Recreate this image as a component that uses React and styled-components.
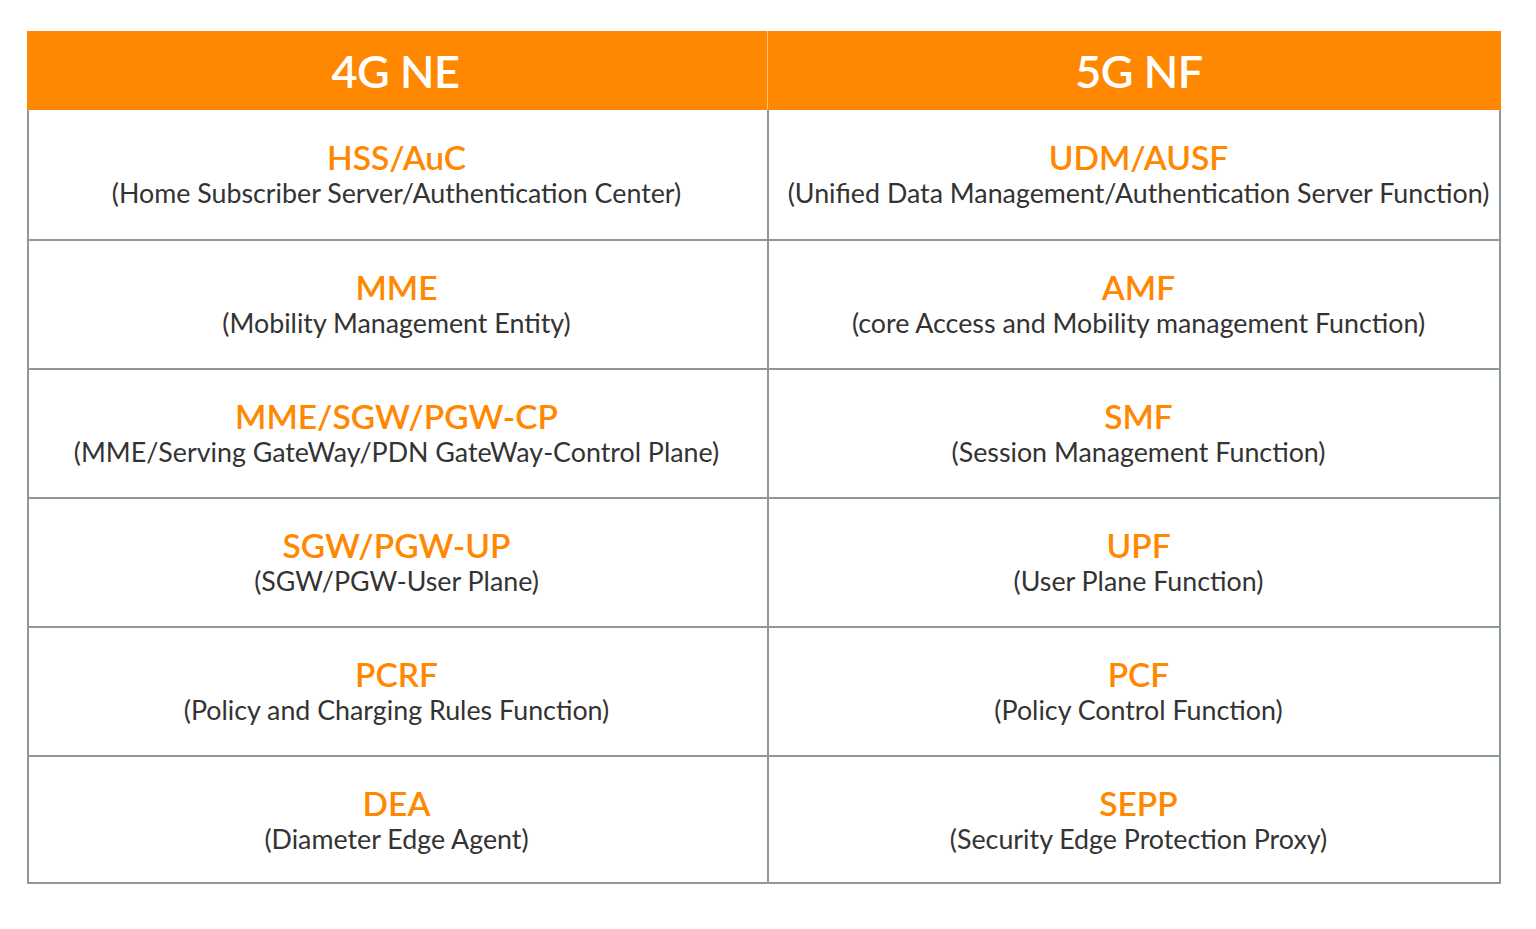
import styled, { createGlobalStyle } from "styled-components";

const GlobalStyle = createGlobalStyle`
  html, body {
    margin: 0;
    padding: 0;
    background: #ffffff;
    font-family: Lato, "Open Sans", sans-serif;
  }
`;

const Page = styled.div`
  width: 1536px;
  height: 929px;
  padding: 31px 0 0 27px;
  box-sizing: border-box;
`;

const Table = styled.div`
  display: grid;
  grid-template-columns: 740px 734px;
  width: 1474px;
`;

const HeadCell = styled.div`
  height: 79px;
  background: #ff8800;
  color: #ffffff;
  font-size: 45px;
  font-weight: 600;
  display: flex;
  align-items: center;
  justify-content: center;
  box-sizing: border-box;
  border-left: ${(p) => (p.$right ? "1px solid #ffc07a" : "none")};
  padding-left: ${(p) => (p.$right ? "9px" : "0")};
  padding-right: ${(p) => (p.$right ? "0" : "3px")};
  letter-spacing: -0.5px;
`;

const Cell = styled.div`
  height: 129px;
  display: flex;
  flex-direction: column;
  align-items: center;
  justify-content: center;
  box-sizing: border-box;
  border-left: 2px solid #8e979d;
  border-right: ${(p) => (p.$right ? "2px solid #8e979d" : "none")};
  border-top: ${(p) => (p.$top ? "none" : "2px solid #8e979d")};
  border-bottom: ${(p) => (p.$last ? "2px solid #8e979d" : "none")};
  padding-left: ${(p) => (p.$right ? "9px" : "0")};
  padding-right: ${(p) => (p.$right ? "0" : "3px")};
  padding-bottom: ${(p) => (p.$last ? "0" : "2px")};
`;

const Title = styled.div`
  color: #ff8800;
  font-size: 33.5px;
  font-weight: 600;
  line-height: 36px;
`;

const Sub = styled.div`
  color: #333333;
  font-size: 26.8px;
  line-height: 32px;
  margin-top: 2px;
`;

const rows = [
  ["HSS/AuC", "(Home Subscriber Server/Authentication Center)", "UDM/AUSF", "(Unified Data Management/Authentication Server Function)"],
  ["MME", "(Mobility Management Entity)", "AMF", "(core Access and Mobility management Function)"],
  ["MME/SGW/PGW-CP", "(MME/Serving GateWay/PDN GateWay-Control Plane)", "SMF", "(Session Management Function)"],
  ["SGW/PGW-UP", "(SGW/PGW-User Plane)", "UPF", "(User Plane Function)"],
  ["PCRF", "(Policy and Charging Rules Function)", "PCF", "(Policy Control Function)"],
  ["DEA", "(Diameter Edge Agent)", "SEPP", "(Security Edge Protection Proxy)"],
];

export default function App() {
  return (
    <Page>
      <GlobalStyle />
      <Table>
        <HeadCell>4G NE</HeadCell>
        <HeadCell $right>5G NF</HeadCell>
        {rows.map((r, i) => {
          const top = i === 0;
          const last = i === rows.length - 1;
          return [
            <Cell key={`a${i}`} $top={top} $last={last}>
              <Title>{r[0]}</Title>
              <Sub>{r[1]}</Sub>
            </Cell>,
            <Cell key={`b${i}`} $right $top={top} $last={last}>
              <Title>{r[2]}</Title>
              <Sub>{r[3]}</Sub>
            </Cell>,
          ];
        })}
      </Table>
    </Page>
  );
}
